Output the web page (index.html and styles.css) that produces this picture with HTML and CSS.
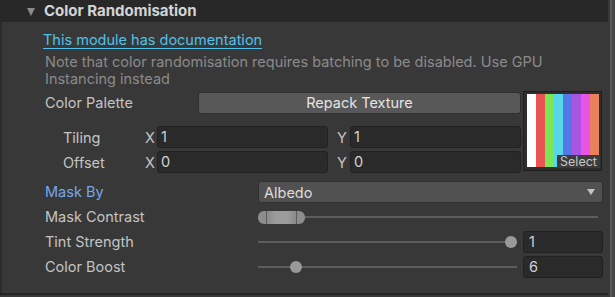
FILE: index.html
```html
<!DOCTYPE html>
<html>
<head>
<meta charset="utf-8">
<link rel="stylesheet" href="styles.css">
</head>
<body>
<div class="inspector">
  <div class="main">
    <div class="header">
      <span class="foldout"></span>
      <span class="title">Color Randomisation</span>
    </div>
    <div class="body">
      <div class="doc-row"><a class="doc-link">This module has documentation</a></div>
      <p class="note">Note that color randomisation requires batching to be disabled. Use GPU Instancing instead</p>
      <div class="palette">
        <div class="palette-fields">
          <div class="row palette-row">
            <span class="label palette-label">Color Palette</span>
            <div class="btn">Repack Texture</div>
          </div>
          <div class="row vec-row">
            <span class="sublabel">Tiling</span>
            <span class="axis">X</span><span class="field">1</span>
            <span class="axis axis-y">Y</span><span class="field">1</span>
          </div>
          <div class="row vec-row offset-row">
            <span class="sublabel">Offset</span>
            <span class="axis">X</span><span class="field">0</span>
            <span class="axis axis-y">Y</span><span class="field">0</span>
          </div>
        </div>
        <div class="texture">
          <div class="stripes">
            <span class="s white"></span><span class="s red"></span><span class="s green"></span><span class="s cyan"></span><span class="s blue"></span><span class="s purple"></span><span class="s magenta"></span><span class="s orange"></span>
          </div>
          <span class="select">Select</span>
        </div>
      </div>
      <div class="row prop mask-row">
        <span class="label wide blue-label">Mask By</span>
        <div class="dropdown"><span>Albedo</span><span class="caret"></span></div>
      </div>
      <div class="row prop">
        <span class="label wide">Mask Contrast</span>
        <div class="minmax">
          <div class="mm-thumb"><span class="cap cap-l"></span><span class="mid"></span><span class="cap cap-r"></span></div>
          <div class="mm-track"></div>
        </div>
      </div>
      <div class="row prop">
        <span class="label wide">Tint Strength</span>
        <div class="slider"><div class="track"></div><div class="knob" style="left: 247px"></div></div>
        <span class="field num">1</span>
      </div>
      <div class="row prop">
        <span class="label wide">Color Boost</span>
        <div class="slider"><div class="track"></div><div class="knob" style="left: 32px"></div></div>
        <span class="field num">6</span>
      </div>
    </div>
    <div class="bottom-line"></div>
  </div>
  <div class="scrollbar"></div>
</div>
</body>
</html>
```

FILE: styles.css
```css
html, body {
  margin: 0;
  padding: 0;
  background: #383838;
}
body {
  font-family: Inter, "Noto Sans", sans-serif;
  font-size: 14.5px;
  color: #c4c4c4;
}
.inspector {
  width: 615px;
  height: 297px;
  display: flex;
  overflow: hidden;
}
.main {
  width: 610px;
  display: flex;
  flex-direction: column;
}
.header {
  width: 608px;
  height: 22px;
  background: #282828;
  display: flex;
  align-items: center;
  box-sizing: border-box;
  padding-left: 27px;
}
.foldout {
  width: 0;
  height: 0;
  border-left: 4.5px solid transparent;
  border-right: 4.5px solid transparent;
  border-top: 8px solid #8a8a8a;
  margin-top: 1px;
}
.title {
  margin-left: 9px;
  font-size: 15px;
  font-weight: 700;
  color: #d4d4d4;
  line-height: 22px;
}
.body {
  height: 271px;
  border-left: 2px solid #2c2c2c;
  box-sizing: border-box;
  padding: 9px 7px 0 43px;
}
.doc-row {
  height: 18px;
  margin-left: -2px;
}
.doc-link {
  display: inline-block;
  color: #4ec2ea;
  line-height: 17px;
  border-bottom: 1px solid #4ec2ea;
}
.note {
  margin: 4px 0 0 0;
  color: #8b8b8b;
  line-height: 17px;
  width: 520px;
}
.palette {
  display: flex;
  margin-top: 4px;
  height: 82px;
}
.palette-fields {
  width: 476px;
  padding-top: 1px;
}
.row {
  display: flex;
  align-items: center;
  height: 22px;
}
.label {
  flex: none;
  line-height: 22px;
}
.palette-label {
  width: 153px;
}
.btn {
  flex: 1;
  height: 22px;
  box-sizing: border-box;
  background: #585858;
  border: 1px solid #303030;
  border-radius: 3px;
  color: #e4e4e4;
  text-align: center;
  line-height: 20px;
}
.vec-row {
  margin-top: 12px;
  padding-left: 18px;
}
.offset-row {
  margin-top: 3px;
}
.sublabel {
  width: 82px;
  flex: none;
}
.axis {
  width: 12px;
  flex: none;
}
.axis-y {
  margin-left: 9px;
  width: 13px;
}
.field {
  flex: 1;
  height: 22px;
  box-sizing: border-box;
  background: #2a2a2a;
  border: 1px solid #212121;
  border-radius: 3px;
  padding-left: 3px;
  line-height: 20px;
  color: #d2d2d2;
}
.texture {
  position: relative;
  margin-left: 2px;
  width: 79px;
  height: 80px;
  box-sizing: border-box;
  background: #2e2e2e;
  border: 1px solid #1f1f1f;
  padding: 2px 2px 3px 3px;
}
.stripes {
  display: flex;
  height: 100%;
}
.s {
  flex: 1;
}
.white { background: #ffffff; }
.red { background: #e85454; }
.green { background: #7ce752; }
.cyan { background: #55d6e9; }
.blue { background: #5577e8; }
.purple { background: #a855e2; }
.magenta { background: #e855e6; }
.orange { background: #e9815a; }
.select {
  position: absolute;
  right: 1px;
  bottom: 2px;
  width: 43px;
  height: 13px;
  background: #3b3b3b;
  color: #c6c6c6;
  font-size: 12.5px;
  line-height: 13px;
  text-align: center;
}
.prop {
  margin-top: 3px;
}
.mask-row {
  margin-top: 8px;
}
.wide {
  width: 213px;
}
.blue-label {
  color: #74a6ec;
}
.dropdown {
  flex: 1;
  height: 22px;
  box-sizing: border-box;
  background: #515151;
  border: 1px solid #303030;
  border-radius: 3px;
  padding: 0 7px 0 5px;
  display: flex;
  align-items: center;
  justify-content: space-between;
  color: #dcdcdc;
}
.caret {
  width: 0;
  height: 0;
  border-left: 4px solid transparent;
  border-right: 4px solid transparent;
  border-top: 6px solid #c4c4c4;
}
.minmax {
  flex: 1;
  display: flex;
  align-items: center;
  padding-right: 5px;
}
.mm-thumb {
  display: flex;
  width: 47px;
  height: 13px;
  flex: none;
}
.cap {
  width: 8px;
  background: #8d8d8d;
}
.cap-l {
  border-radius: 6px 0 0 6px;
  border-right: 1px solid #5c5c5c;
}
.cap-r {
  border-radius: 0 6px 6px 0;
  border-left: 1px solid #5c5c5c;
}
.mid {
  flex: 1;
  background: linear-gradient(to right, #8a8a8a, #9c9c9c 30%, #9c9c9c 70%, #8a8a8a);
}
.mm-track {
  flex: 1;
  height: 2px;
  background: #5c5c5c;
}
.slider {
  position: relative;
  width: 259px;
  height: 22px;
  flex: none;
  display: flex;
  align-items: center;
  margin-right: 6px;
}
.track {
  width: 100%;
  height: 2px;
  background: #5c5c5c;
}
.knob {
  position: absolute;
  top: 5px;
  width: 12px;
  height: 12px;
  border-radius: 50%;
  background: #999999;
}
.num {
  flex: none;
  width: 80px;
  padding-left: 5px;
}
.bottom-line {
  width: 608px;
  height: 2px;
  background: #232323;
}
.scrollbar {
  width: 5px;
  height: 297px;
  box-sizing: border-box;
  border-left: 2px solid #595959;
  background: #474747;
}
```
